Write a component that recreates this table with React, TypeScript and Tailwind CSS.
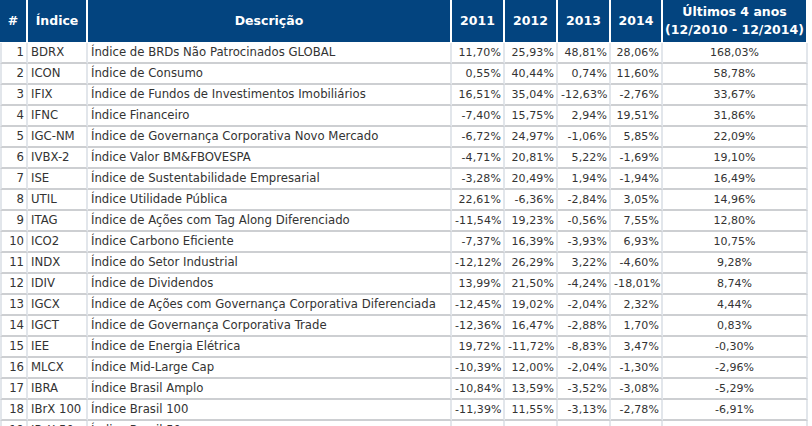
const rows: [string, string, string, string, string, string, string][] = [
  ["BDRX", "Índice de BRDs Não Patrocinados GLOBAL", "11,70%", "25,93%", "48,81%", "28,06%", "168,03%"],
  ["ICON", "Índice de Consumo", "0,55%", "40,44%", "0,74%", "11,60%", "58,78%"],
  ["IFIX", "Índice de Fundos de Investimentos Imobiliários", "16,51%", "35,04%", "-12,63%", "-2,76%", "33,67%"],
  ["IFNC", "Índice Financeiro", "-7,40%", "15,75%", "2,94%", "19,51%", "31,86%"],
  ["IGC-NM", "Índice de Governança Corporativa Novo Mercado", "-6,72%", "24,97%", "-1,06%", "5,85%", "22,09%"],
  ["IVBX-2", "Índice Valor BM&FBOVESPA", "-4,71%", "20,81%", "5,22%", "-1,69%", "19,10%"],
  ["ISE", "Índice de Sustentabilidade Empresarial", "-3,28%", "20,49%", "1,94%", "-1,94%", "16,49%"],
  ["UTIL", "Índice Utilidade Pública", "22,61%", "-6,36%", "-2,84%", "3,05%", "14,96%"],
  ["ITAG", "Índice de Ações com Tag Along Diferenciado", "-11,54%", "19,23%", "-0,56%", "7,55%", "12,80%"],
  ["ICO2", "Índice Carbono Eficiente", "-7,37%", "16,39%", "-3,93%", "6,93%", "10,75%"],
  ["INDX", "Índice do Setor Industrial", "-12,12%", "26,29%", "3,22%", "-4,60%", "9,28%"],
  ["IDIV", "Índice de Dividendos", "13,99%", "21,50%", "-4,24%", "-18,01%", "8,74%"],
  ["IGCX", "Índice de Ações com Governança Corporativa Diferenciada", "-12,45%", "19,02%", "-2,04%", "2,32%", "4,44%"],
  ["IGCT", "Índice de Governança Corporativa Trade", "-12,36%", "16,47%", "-2,88%", "1,70%", "0,83%"],
  ["IEE", "Índice de Energia Elétrica", "19,72%", "-11,72%", "-8,83%", "3,47%", "-0,30%"],
  ["MLCX", "Índice Mid-Large Cap", "-10,39%", "12,00%", "-2,04%", "-1,30%", "-2,96%"],
  ["IBRA", "Índice Brasil Amplo", "-10,84%", "13,59%", "-3,52%", "-3,08%", "-5,29%"],
  ["IBrX 100", "Índice Brasil 100", "-11,39%", "11,55%", "-3,13%", "-2,78%", "-6,91%"],
  ["IBrX 50", "Índice Brasil 50", "-11,64%", "8,87%", "-4,49%", "-2,44%", "-10,15%"],
];

const th = "bg-[#03447f] text-white font-bold text-[12.5px] border-r-2 border-b border-white px-0 text-center align-middle whitespace-nowrap";
const td = "h-[21px] border-r-2 border-b-2 border-r-[#e2e6eb] border-b-[#cdcfd2] px-[3px] text-[11.7px] text-[#333] leading-none whitespace-nowrap";
const num = "text-[11px] text-right pr-[2px] tracking-[0.1px]";

export default function App() {
  return (
    <div className="bg-white w-[812px] h-[426px] overflow-hidden" style={{ fontFamily: '"DejaVu Sans", Verdana, sans-serif' }}>
      <table className="table-fixed border-separate border-spacing-0 w-[808px]">
        <colgroup>
          <col className="w-[28px]" />
          <col className="w-[60px]" />
          <col className="w-[364px]" />
          <col className="w-[53px]" />
          <col className="w-[53px]" />
          <col className="w-[53px]" />
          <col className="w-[52px]" />
          <col />
        </colgroup>
        <thead>
          <tr className="h-[43px]">
            <th className={th}>#</th>
            <th className={th}>Índice</th>
            <th className={th}>Descrição</th>
            <th className={th}>2011</th>
            <th className={th}>2012</th>
            <th className={th}>2013</th>
            <th className={th}>2014</th>
            <th className={`${th} leading-[18px] border-r-0 font-semibold`}>
              Últimos 4 anos
              <br />
              (12/2010 - 12/2014)
            </th>
          </tr>
        </thead>
        <tbody>
          {rows.map((r, i) => (
            <tr key={r[0]}>
              <td className={`${td} text-right border-l-2 border-l-[#e2e6eb] pr-[2px]`}>{i + 1}</td>
              <td className={td}>{r[0]}</td>
              <td className={td}>{r[1]}</td>
              <td className={`${td} ${num}`}>{r[2]}</td>
              <td className={`${td} ${num}`}>{r[3]}</td>
              <td className={`${td} ${num}`}>{r[4]}</td>
              <td className={`${td} ${num}`}>{r[5]}</td>
              <td className={`${td} text-center text-[11px]`}>{r[6]}</td>
            </tr>
          ))}
        </tbody>
      </table>
    </div>
  );
}
